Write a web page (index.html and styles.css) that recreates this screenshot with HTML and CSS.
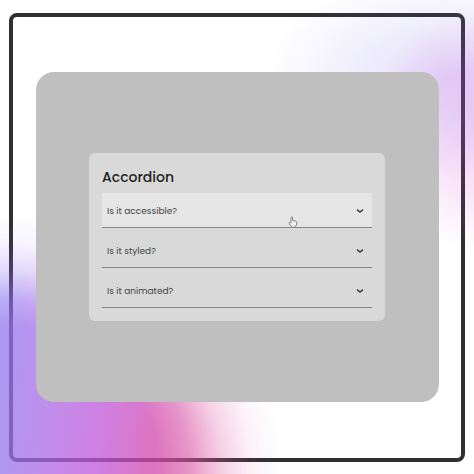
FILE: index.html
```html
<!DOCTYPE html>
<html lang="en">
<head>
  <meta charset="UTF-8">
  <meta name="viewport" content="width=device-width, initial-scale=1.0">
  <title>Accordion</title>
  <link rel="stylesheet" href="styles.css">
</head>
<body>
  <div class="frame">
    <main class="stage">
      <section class="card">
        <h1>Accordion</h1>
        <div class="accordion">
          <button type="button" class="item active">
            <span>Is it accessible?</span>
            <svg class="chevron" viewBox="0 0 12 12"><path d="M3 4.6 L6 7 L9 4.6"/></svg>
            <svg class="pointer" viewBox="0 0 10 12"><path d="M3 7.2V1.6C3 .4 4.7.4 4.7 1.6V4.6L7.8 5.2Q8.9 5.5 8.8 6.6L8.3 9.2Q7.8 11.3 5.8 11.3H5Q3.8 11.3 3 10.2L1.1 7.6C.5 6.7 1.5 5.9 2.2 6.5Z"/></svg>
          </button>
          <button type="button" class="item">
            <span>Is it styled?</span>
            <svg class="chevron" viewBox="0 0 12 12"><path d="M3 4.6 L6 7 L9 4.6"/></svg>
          </button>
          <button type="button" class="item">
            <span>Is it animated?</span>
            <svg class="chevron" viewBox="0 0 12 12"><path d="M3 4.6 L6 7 L9 4.6"/></svg>
          </button>
        </div>
      </section>
    </main>
  </div>
  <div class="glow glow-left"></div>
  <div class="glow glow-right"></div>
</body>
</html>
```
FILE: styles.css
```css
* {
  box-sizing: border-box;
}
body {
  font-family: Poppins, Inter, sans-serif;
  background-color: #fff;
  display: flex;
  min-height: 100vh;
  margin: 0;
  padding: 13px 9px 12px;
}
.frame {
  flex: 1;
  display: flex;
  padding: 55px 22px 56px 23px;
  border: 4px solid #302f31;
  border-radius: 8px;
}
.stage {
  position: relative;
  z-index: 2;
  flex: 1;
  display: flex;
  align-items: center;
  padding: 24px 54px 24px 53px;
  background-color: #bfbfbf;
  border-radius: 18px;
}
.card {
  flex: 1;
  padding: 13px;
  background-color: #d9d9d9;
  border-radius: 6px;
}
h1 {
  margin: 0 0 5px;
  padding-top: 1px;
  font-size: 14px;
  line-height: 21px;
  font-weight: 500;
  color: #1f1f1f;
}
.accordion {
  display: flex;
  flex-direction: column;
  gap: 5px;
}
.item {
  position: relative;
  display: flex;
  justify-content: space-between;
  align-items: center;
  height: 35px;
  padding: 2px 6px 0 5px;
  border: none;
  border-bottom: 1px solid #858585;
  background: none;
  font-family: inherit;
  font-size: 9px;
  line-height: 16px;
  color: #444;
  text-align: left;
  cursor: pointer;
}
.item:hover,
.item.active {
  background-color: #e6e6e6;
}
.chevron {
  width: 12px;
  height: 12px;
  fill: none;
  stroke: #3a3a3a;
  stroke-width: 1.4;
}
.pointer {
  position: absolute;
  right: 74px;
  bottom: -1px;
  width: 10px;
  height: 12px;
  fill: #f2f2f2;
  stroke: #858585;
  stroke-width: 1;
}

/* the glows tint the frame but stay behind the stage */
.glow {
  position: fixed;
  inset: 0;
  z-index: 1;
  pointer-events: none;
}
.glow-left {
  background: linear-gradient(95deg, rgb(135, 125, 240), rgb(150, 118, 238) 8%, rgb(178, 104, 228) 18%, rgb(192, 88, 218) 27%, rgb(210, 74, 175) 37%, rgb(220, 85, 160) 48%);
  opacity: 0.76;
  mask-image: radial-gradient(ellipse 100% 92% at 0 100%, #000 34%, rgba(0, 0, 0, 0.8) 40%, rgba(0, 0, 0, 0.35) 47%, rgba(0, 0, 0, 0.1) 53%, transparent 60%);
}
.glow-right {
  background:
    radial-gradient(ellipse 24% 26% at 102% 27%, rgba(205, 70, 215, 0.22), rgba(205, 70, 215, 0.14) 50%, transparent),
    radial-gradient(ellipse 38% 22% at 94% 16%, rgba(125, 90, 225, 0.2), rgba(115, 105, 230, 0.11) 50%, transparent);
}
```
